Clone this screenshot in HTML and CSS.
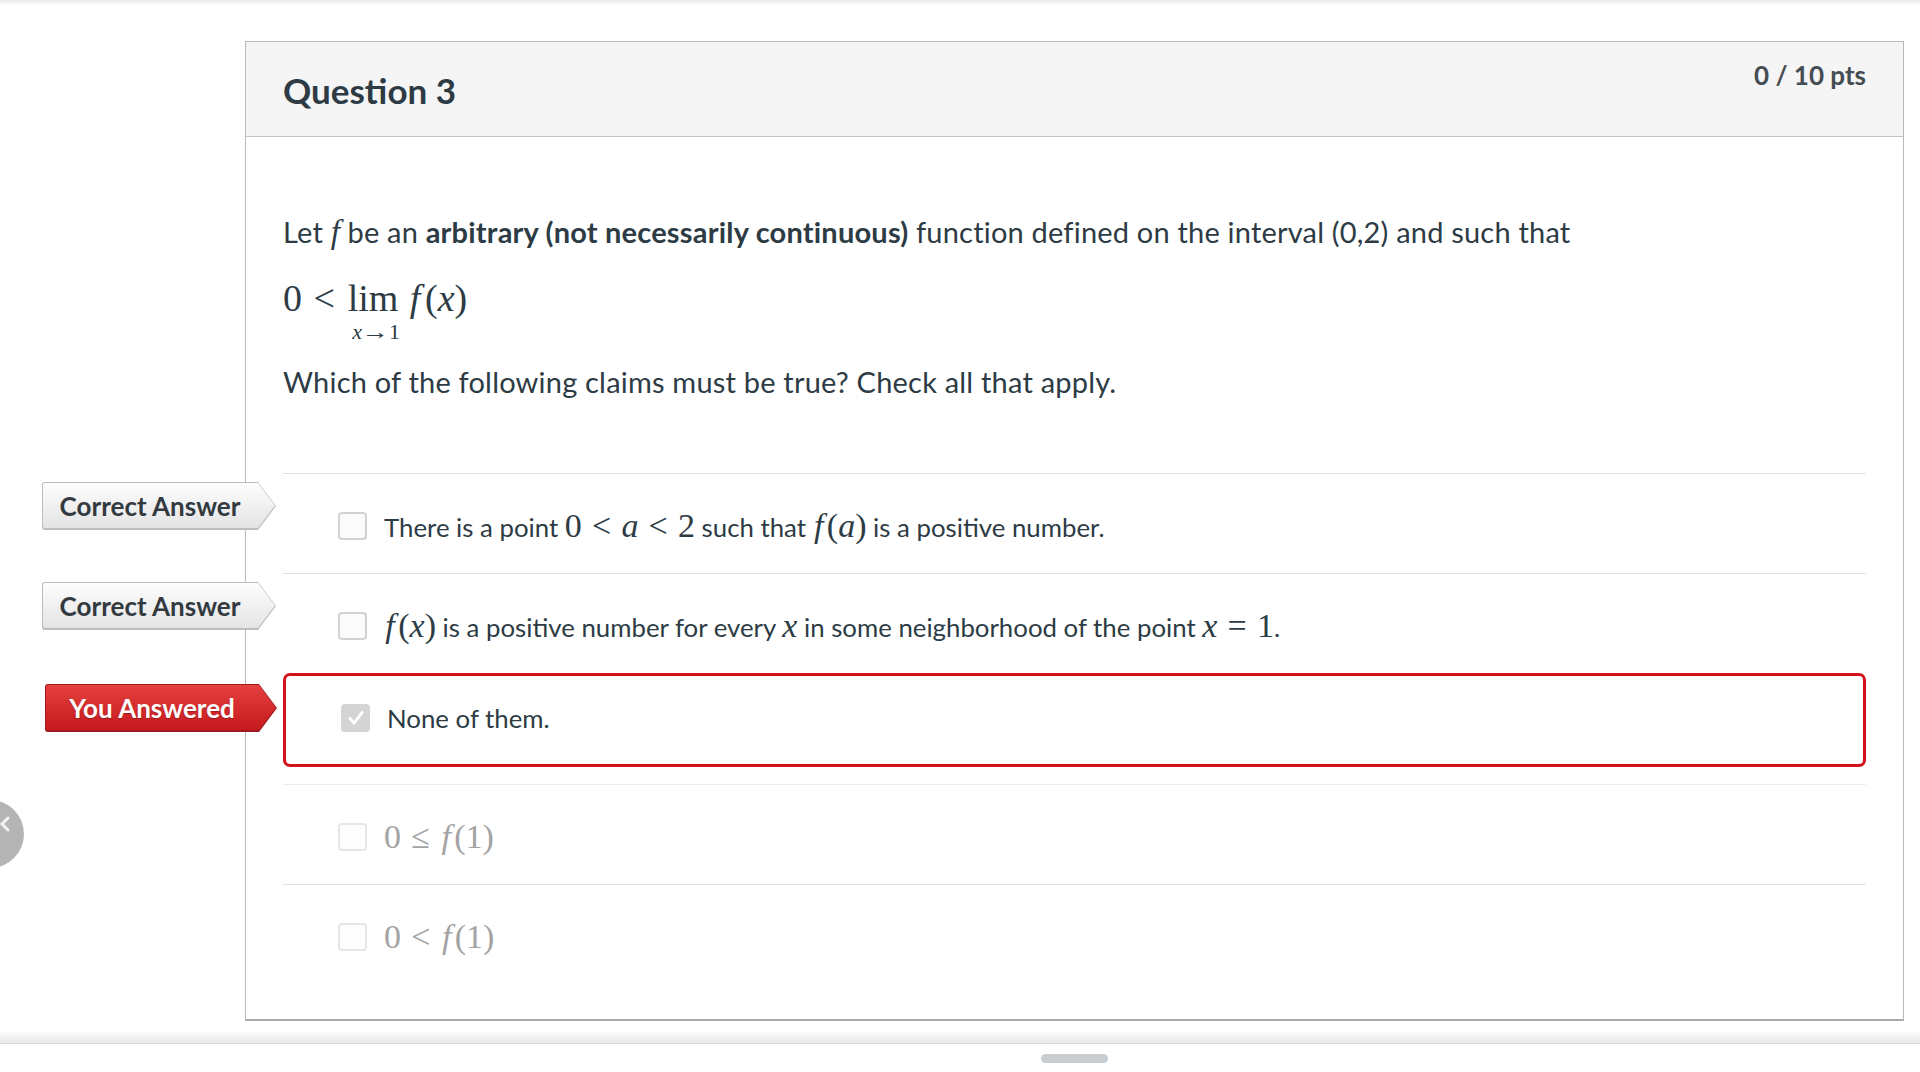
FILE: index.html
```html
<!DOCTYPE html>
<html lang="en">
<head>
<meta charset="utf-8">
<title>Question 3</title>
<link rel="stylesheet" href="styles.css">
</head>
<body>
<div class="topshade"></div>
<div class="side-btn"><svg class="side-btn-icon" viewBox="0 0 20 20" width="20" height="20"><path d="M12 4l-6 6 6 6" stroke="#fff" stroke-width="3" fill="none" stroke-linecap="round"/></svg></div>
<main class="page">
  <section class="question">
    <header class="q-header">
      <h2 class="q-title">Question 3</h2>
      <div class="q-points">0 / 10 pts</div>
    </header>
    <div class="q-body">
      <p class="q-text">Let <span class="math"><span class="mi">f</span></span> be an <strong>arbitrary (not necessarily continuous)</strong> function defined on the interval (0,2) and such that</p>
      <div class="display-math">
        <span class="mn">0</span><span class="mo">&lt;</span>
        <span class="limit"><span class="lim">lim</span><span class="limsub"><span class="mi">x</span><span class="arrow">→</span><span class="mn">1</span></span></span>
        <span class="fx"><span class="mi mf">f</span><span class="mn">(</span><span class="mi">x</span><span class="mn">)</span></span>
      </div>
      <p class="q-text q-text-2">Which of the following claims must be true? Check all that apply.</p>

      <div class="answers">
        <div class="answer">
          <div class="flag flag-correct"><span>Correct Answer</span></div>
          <span class="box"></span>
          <span class="answer-text">There is a point <span class="math"><span class="mn">0</span><span class="mo">&lt;</span><span class="mi">a</span><span class="mo">&lt;</span><span class="mn">2</span></span> such that <span class="math"><span class="mi mf">f</span><span class="mn">(</span><span class="mi">a</span><span class="mn">)</span></span> is a positive number.</span>
        </div>
        <div class="answer">
          <div class="flag flag-correct"><span>Correct Answer</span></div>
          <span class="box"></span>
          <span class="answer-text"><span class="math"><span class="mi mf">f</span><span class="mn">(</span><span class="mi">x</span><span class="mn">)</span></span> is a positive number for every <span class="math"><span class="mi">x</span></span> in some neighborhood of the point <span class="math"><span class="mi">x</span><span class="mo">=</span><span class="mn">1</span></span>.</span>
        </div>
        <div class="answer answer-selected">
          <div class="flag flag-wrong"><span>You Answered</span></div>
          <span class="box box-checked"><svg viewBox="0 0 20 20" width="22" height="22"><path d="M4.5 10.5l3.8 4.2L15.5 5" stroke="#fff" stroke-width="2.6" fill="none" stroke-linecap="round" stroke-linejoin="round"/></svg></span>
          <span class="answer-text">None of them.</span>
        </div>
        <div class="answer answer-faded">
          <span class="box"></span>
          <span class="answer-text"><span class="math"><span class="mn">0</span><span class="mo">≤</span><span class="mi mf">f</span><span class="mn">(1)</span></span></span>
        </div>
        <div class="answer answer-faded">
          <span class="box"></span>
          <span class="answer-text"><span class="math"><span class="mn">0</span><span class="mo">&lt;</span><span class="mi mf">f</span><span class="mn">(1)</span></span></span>
        </div>
      </div>
    </div>
  </section>
</main>
<div class="bottom-shade"></div>
<div class="handle"></div>
</body>
</html>
```

FILE: styles.css
```css
html, body {
  margin: 0;
  padding: 0;
}
body {
  font-family: Lato, "Noto Sans", sans-serif;
  color: #2d3b45;
  background: #fff;
  height: 1072px;
  overflow: hidden;
}
.topshade {
  height: 5px;
  background: linear-gradient(#ebebeb, #fdfdfd);
}
.page {
  padding: 36px 16px 0 245px;
}
.question {
  border: 1px solid #b7b9bb;
  border-bottom: 2px solid #a8a8a8;
}
.q-header {
  display: flex;
  justify-content: space-between;
  align-items: flex-start;
  height: 95px;
  box-sizing: border-box;
  padding: 0 37px;
  background: #f5f5f5;
  border-bottom: 1px solid #c3c3c3;
}
.q-title {
  margin: 27px 0 0;
  font-size: 35px;
  line-height: 42px;
  font-weight: 700;
  color: #2d3b45;
}
.q-points {
  margin-top: 18px;
  font-size: 26px;
  line-height: 31px;
  font-weight: 700;
  color: #454c52;
}
.q-body {
  padding: 75px 37px 35px;
}
.q-text {
  margin: 0;
  font-size: 29px;
  letter-spacing: 0.2px;
  line-height: 40px;
}
.q-text strong {
  font-weight: 700;
}
.q-text-2 {
  margin-top: 19px;
}
.math {
  font-family: "Liberation Serif", "Times New Roman", serif;
  font-size: 34px;
  letter-spacing: 0;
  white-space: nowrap;
}
.q-text .math {
  font-size: 33px;
  line-height: 1;
}
.mi {
  font-family: "Liberation Serif", "Times New Roman", serif;
  font-style: italic;
}
.mn {
  font-family: "Liberation Serif", "Times New Roman", serif;
  font-style: normal;
}
.mo {
  font-family: "Liberation Serif", "Times New Roman", serif;
  margin: 0 0.3em;
}
.mf {
  margin-right: 0.1em;
  margin-left: 0.04em;
}
.display-math {
  display: flex;
  align-items: baseline;
  margin-top: 27px;
  font-family: "Liberation Serif", "Times New Roman", serif;
  font-size: 38px;
  line-height: 1;
}
.display-math .mo {
  margin: 0 0.3em 0 0.3em;
}
.limit {
  display: inline-flex;
  flex-direction: column;
  align-items: center;
  margin-right: 0.22em;
}
.limsub {
  display: flex;
  align-items: baseline;
  font-size: 22px;
  line-height: 1;
  margin-top: 4px;
  margin-left: 6px;
}
.arrow {
  font-size: 21px;
  margin: 0 3px;
  transform: scaleX(1.3);
  display: inline-block;
}
.fx .mf {
  margin-right: 0.12em;
}
.answers {
  margin-top: 71px;
}
.answer {
  position: relative;
  display: flex;
  align-items: center;
  height: 100px;
  box-sizing: border-box;
  padding-top: 5px;
  border-top: 1px solid #e1e1e1;
}
.answer-selected {
  height: 94px;
  padding: 0 0 5px;
  margin-bottom: 17px;
  border: 3px solid #d3121c;
  border-radius: 7px;
}
.answer-selected + .answer {
  border-top-color: #ececec;
}
.box {
  flex: none;
  width: 29px;
  height: 28px;
  box-sizing: border-box;
  margin: 0 17px 0 55px;
  border: 2px solid #d2d2d2;
  border-radius: 4px;
  background: #fbfbfb;
  display: flex;
  align-items: center;
  justify-content: center;
}
.box-checked {
  background: #d4d4d4;
  border-color: #d4d4d4;
}
.answer-text {
  font-size: 25.8px;
  line-height: 40px;
  color: #2d3b45;
}
.answer-faded .answer-text {
  color: #a3a3a3;
}
.answer-faded .box {
  border-color: #e6e6e6;
  background: #fdfdfd;
}
.flag {
  position: absolute;
  left: -241px;
  top: 8px;
  width: 234px;
  height: 48px;
  box-sizing: border-box;
  padding-right: 18px;
  display: flex;
  align-items: center;
  justify-content: center;
  font-family: Lato, "Noto Sans", sans-serif;
  font-size: 26px;
  font-weight: 700;
  clip-path: polygon(0 0, calc(100% - 18px) 0, 100% 50%, calc(100% - 18px) 100%, 0 100%);
  border-radius: 3px 0 0 3px;
}
.flag::before {
  content: "";
  position: absolute;
  left: 1px;
  top: 1px;
  right: 1px;
  bottom: 2px;
  border-radius: 2px 0 0 2px;
  clip-path: polygon(0 0, calc(100% - 17px) 0, 100% 50%, calc(100% - 17px) 100%, 0 100%);
}
.flag span {
  position: relative;
}
.flag-correct {
  background: #bdbdbd;
  color: #333a3f;
}
.flag-correct::before {
  background: linear-gradient(#fdfdfd, #e4e4e4);
}
.flag-wrong {
  left: -241px;
  top: 8px;
  width: 232px;
  background: #9e1a1d;
  color: #fff;
}
.flag-wrong::before {
  background: linear-gradient(#e5403f, #c5191e);
}
.flag-wrong span {
  text-shadow: 0 1px 1px rgba(0,0,0,0.25);
}
.side-btn {
  position: absolute;
  left: -44px;
  top: 800px;
  width: 68px;
  height: 68px;
  border-radius: 50%;
  background: #b4b4b4;
}
.side-btn-icon {
  position: absolute;
  left: 40px;
  top: 14px;
  opacity: 0.85;
}
.bottom-shade {
  margin-top: 9px;
  height: 13px;
  background: linear-gradient(#ffffff, #e9e9e9);
  border-bottom: 1px solid #d9d9d9;
}
.handle {
  margin: 10px 0 0 1041px;
  width: 67px;
  height: 9px;
  border-radius: 5px;
  background: #c8cdd2;
}
```
